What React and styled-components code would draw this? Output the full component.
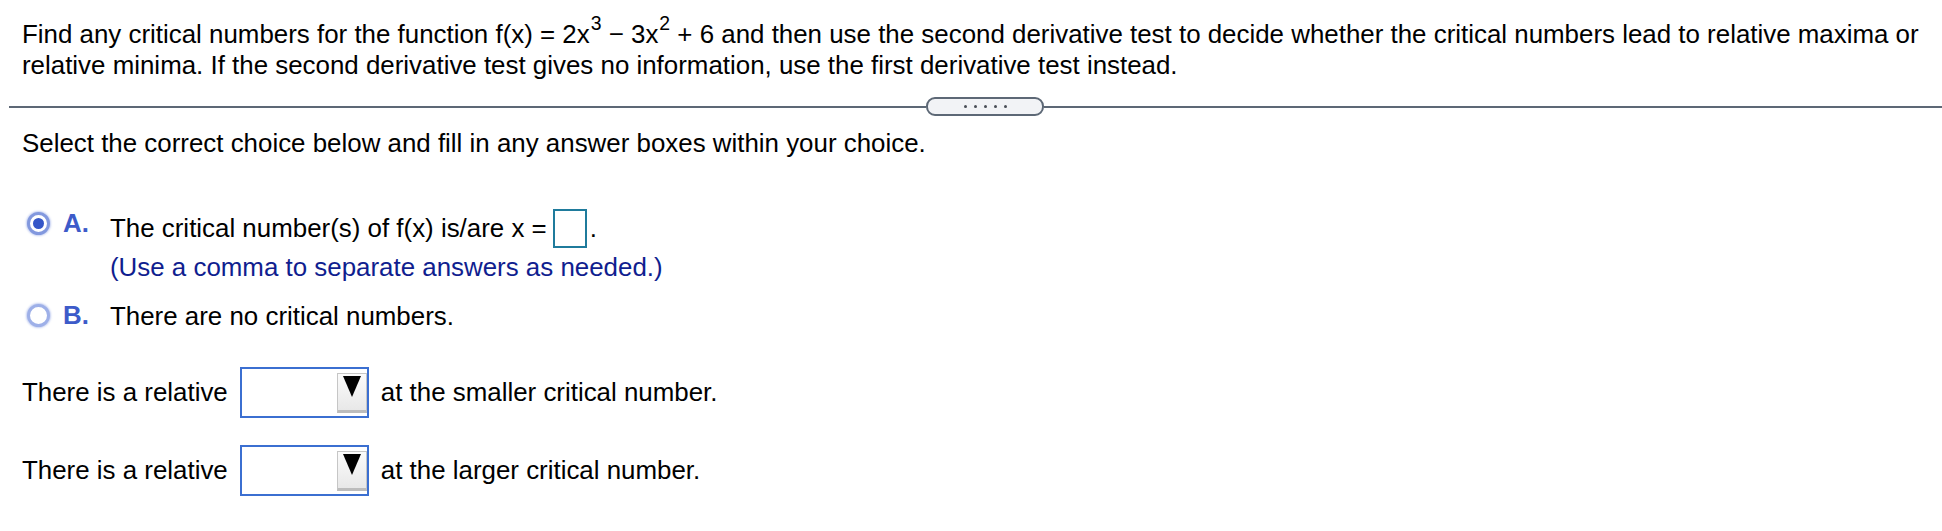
import React from "react";
import styled, { createGlobalStyle } from "styled-components";

const GlobalStyle = createGlobalStyle`
  html, body {
    margin: 0;
    padding: 0;
    background: #ffffff;
  }
  body {
    font-family: "Liberation Sans", Arial, Helvetica, sans-serif;
    font-size: 25.9px;
    color: #000000;
  }
`;

const Page = styled.div`
  padding: 19px 0 30px 22px;
`;

const Problem = styled.div`
  line-height: 31px;
`;

const Line = styled.span`
  display: block;
  white-space: nowrap;
`;

const Sup = styled.span`
  font-size: 0.75em;
  line-height: 0;
  vertical-align: 13px;
  margin-left: 1px;
`;

const Separator = styled.div`
  display: flex;
  align-items: center;
  height: 19px;
  margin: 16px 0 0 -13px;
`;

const Rule = styled.div`
  height: 2px;
  background: #5d6876;
  ${(p) => (p.$width ? `width: ${p.$width}px; flex: none;` : "flex: 1;")}
`;

const Pill = styled.div`
  flex: none;
  box-sizing: border-box;
  width: 118px;
  height: 19px;
  border: 2px solid #5d6876;
  border-radius: 9px;
  background: #f2f3f6;
  display: flex;
  align-items: center;
  justify-content: center;
  gap: 7px;
`;

const Dot = styled.span`
  width: 3px;
  height: 3px;
  border-radius: 50%;
  background: #4a4f57;
`;

const Instruction = styled.div`
  margin-top: 12px;
  line-height: 31px;
`;

const Choices = styled.div`
  display: flex;
  flex-direction: column;
  margin-top: 50px;
`;

const OptionRow = styled.div`
  display: flex;
  align-items: flex-start;
  margin-top: ${(p) => p.$gap || 0}px;
`;

const Marker = styled.div`
  flex: none;
  display: flex;
  align-items: center;
  height: 28px;
  padding-left: 5px;
`;

const Radio = styled.span`
  box-sizing: border-box;
  width: 23px;
  height: 23px;
  border-radius: 50%;
  border: 3px solid ${(p) => (p.$checked ? "#8298de" : "#9eb0e8")};
  box-shadow: 0 0 2px 1px rgba(120, 145, 225, 0.45);
  background: #ffffff;
  display: flex;
  align-items: center;
  justify-content: center;
`;

const RadioDot = styled.span`
  width: 11px;
  height: 11px;
  border-radius: 50%;
  background: #3556c8;
`;

const Letter = styled.span`
  width: 47px;
  margin-left: 13px;
  font-weight: bold;
  color: #3d5bc9;
  line-height: 28px;
`;

const OptionBody = styled.div`
  line-height: 31px;
`;

const AnswerBox = styled.span`
  display: inline-block;
  box-sizing: border-box;
  width: 34px;
  height: 39px;
  border: 2px solid #1f7b9c;
  background: #ffffff;
  vertical-align: -11px;
  margin: 0 3px 0 6px;
`;

const Hint = styled.div`
  color: #101e8f;
  line-height: 32px;
  margin-top: 3px;
`;

const DropRow = styled.div`
  display: flex;
  align-items: center;
  gap: 12px;
  margin-top: ${(p) => p.$gap}px;
  line-height: 31px;
`;

const Select = styled.div`
  flex: none;
  box-sizing: border-box;
  width: 129px;
  height: 51px;
  border: 2px solid #3b6fd1;
  background: #ffffff;
  display: flex;
  justify-content: flex-end;
  align-items: flex-start;
  padding-top: 4px;
`;

const SelectButton = styled.div`
  box-sizing: border-box;
  width: 30px;
  height: 40px;
  border: 1px solid #c6c6c6;
  border-bottom: 3px solid #bcbcbc;
  background: linear-gradient(#fbfbfb, #e8e8e8);
  display: flex;
  justify-content: center;
  align-items: flex-start;
  padding-top: 2px;
`;

function Caret() {
  return (
    <svg width="18" height="21" viewBox="0 0 18 21" aria-hidden="true">
      <polygon points="0,0 18,0 9,21" fill="#000" />
    </svg>
  );
}

function Dropdown() {
  return (
    <Select>
      <SelectButton>
        <Caret />
      </SelectButton>
    </Select>
  );
}

export default function App() {
  return (
    <>
      <GlobalStyle />
      <Page>
        <Problem>
          <Line>
            Find any critical numbers for the function f(x) = 2x<Sup>3</Sup> − 3x<Sup>2</Sup> + 6 and then use
            the second derivative test to decide whether the critical numbers lead to relative maxima or
          </Line>
          <Line>
            relative minima. If the second derivative test gives no information, use the first derivative test
            instead.
          </Line>
        </Problem>

        <Separator>
          <Rule $width={917} />
          <Pill>
            {[0, 1, 2, 3, 4].map((i) => (
              <Dot key={i} />
            ))}
          </Pill>
          <Rule />
        </Separator>

        <Instruction>Select the correct choice below and fill in any answer boxes within your choice.</Instruction>

        <Choices>
          <OptionRow>
            <Marker>
              <Radio $checked>
                <RadioDot />
              </Radio>
              <Letter>A.</Letter>
            </Marker>
            <OptionBody>
              <div>
                The critical number(s) of f(x) is/are x =<AnswerBox />.
              </div>
              <Hint>(Use a comma to separate answers as needed.)</Hint>
            </OptionBody>
          </OptionRow>
          <OptionRow $gap={18}>
            <Marker>
              <Radio />
              <Letter>B.</Letter>
            </Marker>
            <OptionBody>There are no critical numbers.</OptionBody>
          </OptionRow>
        </Choices>

        <DropRow $gap={35}>
          <span>There is a relative</span>
          <Dropdown />
          <span>at the smaller critical number.</span>
        </DropRow>
        <DropRow $gap={27}>
          <span>There is a relative</span>
          <Dropdown />
          <span>at the larger critical number.</span>
        </DropRow>
      </Page>
    </>
  );
}
